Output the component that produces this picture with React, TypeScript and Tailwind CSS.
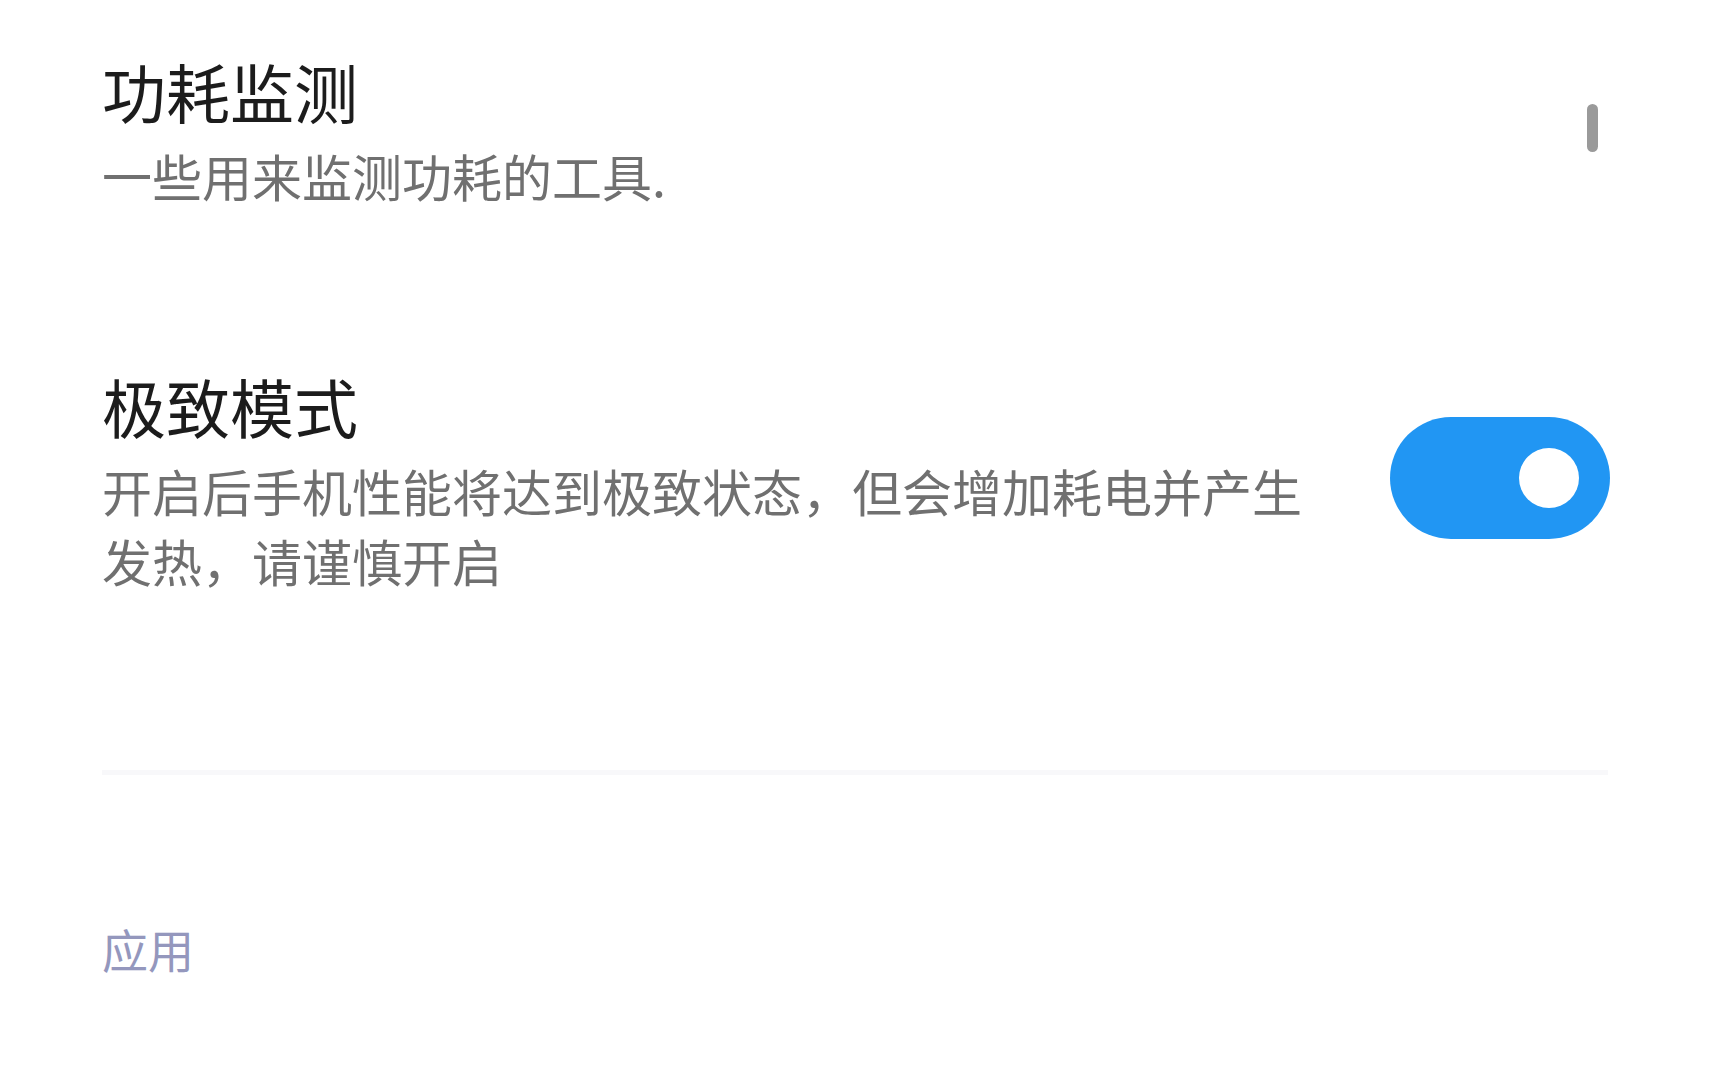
export default function App() {
  return (
    <div
      className="relative min-h-screen w-full overflow-hidden bg-white pl-[102px] pr-[112px]"
      style={{ fontFamily: '"Noto Sans CJK SC", "Noto Sans", sans-serif' }}
    >
      {/* scroll indicator */}
      <div className="absolute left-[1587px] top-[104px] h-[48px] w-[11px] rounded-full bg-[#9a9a9a]" />

      <div className="pt-[58px]">
        <h2 className="text-[64px] font-normal leading-none text-[#1c1c1c]">功耗监测</h2>
        <p className="mt-[18px] text-[50px] leading-[70px] text-[#707070]">一些用来监测功耗的工具.</p>
      </div>

      <div className="mt-[163px] flex items-start justify-between">
        <div className="w-[1230px]">
          <h2 className="text-[64px] font-normal leading-none text-[#1c1c1c]">极致模式</h2>
          <p className="mt-[18px] text-[50px] leading-[70px] text-[#707070]">
            开启后手机性能将达到极致状态，但会增加耗电并产生发热，请谨慎开启
          </p>
        </div>
        <button className="mr-[6px] mt-[44px] flex h-[122px] w-[220px] shrink-0 items-center justify-end rounded-full bg-[#2196f3] pr-[31px]">
          <span className="block h-[60px] w-[60px] rounded-full bg-white" />
        </button>
      </div>

      <div className="mr-[8px] mt-[175px] h-[5px] bg-[#f8f8fa]" />

      <div className="mt-[150px] text-[46px] leading-none text-[#9497bd]">应用</div>
    </div>
  );
}
